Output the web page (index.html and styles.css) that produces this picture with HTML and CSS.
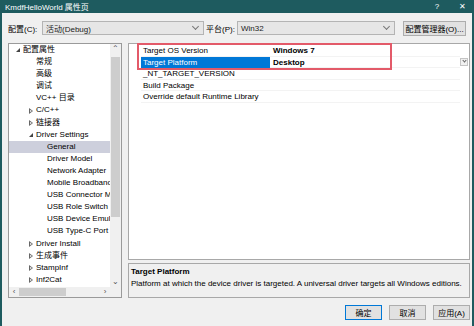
FILE: index.html
```html
<!DOCTYPE html>
<html lang="zh-CN">
<head>
    <meta charset="UTF-8">
    <title>KmdfHelloWorld 属性页</title>
    <link rel="stylesheet" href="styles.css">
</head>
<body>
    <div class="window">
        <div class="titlebar">
            <span class="title">KmdfHelloWorld 属性页</span>
            <span class="help">?</span>
            <span class="close">✕</span>
        </div>
        <div class="content">
            <div class="toolbar">
                <label class="lbl">配置(C):</label>
                <div class="combo combo-config"><span>活动(Debug)</span><i class="chev"></i></div>
                <label class="lbl">平台(P):</label>
                <div class="combo combo-platform"><span>Win32</span><i class="chev"></i></div>
                <button class="btn btn-manager">配置管理器(O)...</button>
            </div>

            <div class="main">
                <div class="tree">
                    <div class="tree-items">
                        <div class="row l1"><i class="tw open"></i>配置属性</div>
                        <div class="row l2">常规</div>
                        <div class="row l2">高级</div>
                        <div class="row l2">调试</div>
                        <div class="row l2">VC++ 目录</div>
                        <div class="row l2a"><i class="tw shut"></i>C/C++</div>
                        <div class="row l2a"><i class="tw shut"></i>链接器</div>
                        <div class="row l2a"><i class="tw open"></i>Driver Settings</div>
                        <div class="row l3 sel">General</div>
                        <div class="row l3">Driver Model</div>
                        <div class="row l3">Network Adapter</div>
                        <div class="row l3">Mobile Broadband</div>
                        <div class="row l3">USB Connector Manager</div>
                        <div class="row l3">USB Role Switch Driver</div>
                        <div class="row l3">USB Device Emulation</div>
                        <div class="row l3">USB Type-C Port Controller</div>
                        <div class="row l2a"><i class="tw shut"></i>Driver Install</div>
                        <div class="row l2a"><i class="tw shut"></i>生成事件</div>
                        <div class="row l2a"><i class="tw shut"></i>StampInf</div>
                        <div class="row l2a"><i class="tw shut"></i>Inf2Cat</div>
                    </div>
                    <div class="vscroll">
                        <span class="arrow">&#8963;</span>
                        <div class="vtrack"><div class="vthumb"></div></div>
                        <span class="arrow">&#8964;</span>
                    </div>
                    <div class="hscroll">
                        <span class="arrow">&lsaquo;</span>
                        <div class="htrack"><div class="hthumb"></div></div>
                        <span class="arrow">&rsaquo;</span>
                    </div>
                    <div class="corner"></div>
                </div>

                <div class="right">
                    <div class="grid">
                        <div class="prop">
                            <div class="name">Target OS Version</div>
                            <div class="value bold">Windows 7</div>
                        </div>
                        <div class="prop">
                            <div class="name picked">Target Platform</div>
                            <div class="value bold">Desktop<i class="drop"></i></div>
                        </div>
                        <div class="prop">
                            <div class="name">_NT_TARGET_VERSION</div>
                            <div class="value"></div>
                        </div>
                        <div class="prop">
                            <div class="name">Build Package</div>
                            <div class="value"></div>
                        </div>
                        <div class="prop">
                            <div class="name">Override default Runtime Library</div>
                            <div class="value"></div>
                        </div>
                        <div class="mark"></div>
                    </div>
                    <div class="desc">
                        <div class="desc-title">Target Platform</div>
                        <div class="desc-text">Platform at which the device driver is targeted. A universal driver targets all Windows editions.</div>
                    </div>
                </div>
            </div>

            <div class="footer">
                <button class="btn btn-ok">确定</button>
                <button class="btn">取消</button>
                <button class="btn">应用(A)</button>
            </div>
        </div>
    </div>
</body>
</html>
```

FILE: styles.css
```css
html, body {
    margin: 0;
    padding: 0;
}
body {
    width: 474px;
    height: 326px;
    overflow: hidden;
    font-family: "Liberation Sans", "Noto Sans CJK SC", sans-serif;
    font-size: 8px;
    color: #000;
}
.window {
    width: 474px;
    height: 326px;
    box-sizing: border-box;
    background-color: #1e5b5f;
    padding: 0 2px;
    display: flex;
    flex-direction: column;
}
.titlebar {
    height: 13px;
    flex: none;
    display: flex;
    align-items: center;
    color: #fff;
    font-size: 8px;
}
.titlebar .title {
    margin-left: 3px;
    flex: 1;
}
.titlebar .help {
    width: 10px;
    text-align: center;
    margin-right: 15px;
}
.titlebar .close {
    width: 10px;
    text-align: center;
    margin-right: 5px;
}
.content {
    flex: 1;
    background-color: #f0f0f0;
    padding: 0 2px 0 6px;
    display: flex;
    flex-direction: column;
}
.toolbar {
    display: flex;
    align-items: center;
    height: 16px;
    margin-top: 7px;
}
.lbl {
    width: 34px;
    white-space: nowrap;
}
.combo {
    height: 14px;
    box-sizing: border-box;
    border: 1px solid #b4b4b4;
    background-color: #e6e6e6;
    display: flex;
    align-items: center;
    padding-left: 3px;
    color: #222;
}
.combo span {
    flex: 1;
}
.combo-config {
    width: 162px;
    margin-right: 2px;
}
.combo-platform {
    width: 158px;
    margin-left: -3px;
}
.chev {
    width: 4px;
    height: 4px;
    border-right: 1px solid #777;
    border-bottom: 1px solid #777;
    transform: rotate(45deg);
    margin: 0 5px 3px 0;
}
.btn {
    font-family: inherit;
    font-size: 8px;
    height: 15px;
    box-sizing: border-box;
    border: 1px solid #adadad;
    background-color: #e1e1e1;
    padding: 0;
    color: #000;
}
.btn-manager {
    width: 63px;
    margin-left: 8px;
}
.main {
    display: flex;
    height: 255px;
    margin-top: 7px;
}
.tree {
    width: 114px;
    box-sizing: border-box;
    border: 1px solid #9a9a9a;
    background-color: #fff;
    display: grid;
    grid-template-columns: 1fr 11px;
    grid-template-rows: 1fr 10px;
    overflow: hidden;
}
.tree-items {
    overflow: hidden;
}
.row {
    height: 12.1px;
    line-height: 12.1px;
    white-space: nowrap;
    overflow: hidden;
    display: flex;
    align-items: center;
}
.l1 { padding-left: 7px; }
.l2 { padding-left: 27px; }
.l2a { padding-left: 20px; }
.l3 { padding-left: 38px; }
.sel {
    background-color: #cdcfdc;
}
.tw {
    flex: none;
    width: 5px;
    height: 5px;
    margin-right: 2px;
    box-sizing: border-box;
}
.tw.open {
    width: 0;
    height: 0;
    border-left: 4px solid transparent;
    border-bottom: 4px solid #444;
    margin-right: 3px;
}
.tw.shut {
    width: 0;
    height: 0;
    border-top: 3px solid transparent;
    border-bottom: 3px solid transparent;
    border-left: 4px solid #666;
    position: relative;
    margin-right: 3px;
}
.tw.shut::after {
    content: "";
    position: absolute;
    left: -3px;
    top: -1px;
    border-top: 1px solid transparent;
    border-bottom: 1px solid transparent;
    border-left: 2px solid #fff;
}
.vscroll {
    background-color: #f0f0f0;
    display: flex;
    flex-direction: column;
    align-items: center;
}
.arrow {
    flex: none;
    height: 10px;
    line-height: 10px;
    font-size: 8px;
    color: #555;
    text-align: center;
}
.vtrack {
    flex: 1;
    width: 100%;
    padding-top: 3px;
}
.vthumb {
    margin: 0 1px;
    height: 160px;
    background-color: #cdcdcd;
}
.hscroll {
    background-color: #f0f0f0;
    display: flex;
    align-items: center;
}
.hscroll .arrow {
    width: 10px;
}
.htrack {
    flex: 1;
}
.hthumb {
    width: 47px;
    height: 8px;
    background-color: #cdcdcd;
}
.corner {
    background-color: #f0f0f0;
}
.right {
    flex: 1;
    margin-left: 6px;
    display: flex;
    flex-direction: column;
}
.grid {
    flex: 1;
    position: relative;
    border: 1px solid #a8a8a8;
    background-color: #fff;
    padding: 1px 9px 0 12px;
}
.prop {
    display: grid;
    grid-template-columns: 129px 1fr;
    height: 11.5px;
    line-height: 11.5px;
    border-bottom: 1px solid #f3f3f3;
    box-sizing: border-box;
}
.name {
    padding-left: 2px;
    white-space: nowrap;
}
.name.picked {
    background-color: #0078d7;
    color: #fff;
}
.value {
    padding-left: 3px;
    position: relative;
}
.bold {
    font-weight: bold;
}
.drop {
    position: absolute;
    right: -8px;
    top: 1px;
    width: 8px;
    height: 8px;
    box-sizing: border-box;
    border: 1px solid #c4c4c4;
    background-color: #f0f0f0;
}
.drop::after {
    content: "";
    position: absolute;
    left: 2px;
    top: 0;
    width: 2px;
    height: 2px;
    border-right: 1px solid #666;
    border-bottom: 1px solid #666;
    transform: rotate(45deg);
}
.mark {
    position: absolute;
    left: 8px;
    top: -1px;
    width: 255px;
    height: 27px;
    box-sizing: border-box;
    border: 2px solid #e35a69;
}
.desc {
    height: 35px;
    margin-top: 3px;
    box-sizing: border-box;
    border: 1px solid #a8a8a8;
    padding: 2px 2px 0 2px;
    line-height: 12px;
}
.desc-title {
    font-weight: bold;
}
.desc-text {
    white-space: nowrap;
}
.footer {
    display: flex;
    justify-content: flex-end;
    gap: 7px;
    margin-top: 7px;
}
.footer .btn {
    width: 37px;
}
.btn-ok {
    border-color: #0078d7;
}
```
